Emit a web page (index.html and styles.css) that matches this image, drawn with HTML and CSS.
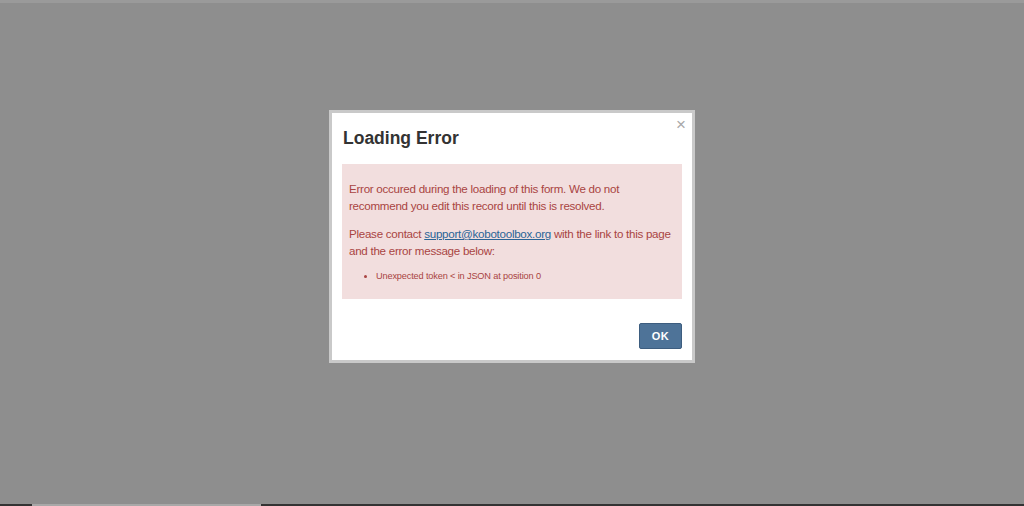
FILE: index.html
```html
<!DOCTYPE html>
<html>
<head>
<meta charset="utf-8">
<link rel="stylesheet" href="styles.css">
</head>
<body>
<div class="topline"></div>
<div class="overlay">
  <div class="modal">
    <span class="close">×</span>
    <h3 class="title">Loading Error</h3>
    <div class="alert">
      <p>Error occured during the loading of this form. We do not recommend you edit this record until this is resolved.</p>
      <p>Please contact <a href="#">support@kobotoolbox.org</a> with the link to this page and the error message below:</p>
      <ul>
        <li>Unexpected token &lt; in JSON at position 0</li>
      </ul>
    </div>
    <div class="footer">
      <button class="ok">OK</button>
    </div>
  </div>
</div>
<div class="bottombar"><span class="seg-a"></span><span class="seg-b"></span><span class="seg-c"></span></div>
</body>
</html>
```

FILE: styles.css
```css
html, body {
  margin: 0;
  padding: 0;
  height: 506px;
  overflow: hidden;
}
body {
  background: #8e8e8e;
  font-family: "Liberation Sans", Arial, sans-serif;
  display: flex;
  flex-direction: column;
}
.topline {
  height: 3px;
  background: #9a9a9a;
}
.overlay {
  flex: 1;
  display: flex;
  justify-content: center;
  align-items: flex-start;
  padding-top: 107px;
}
.modal {
  position: relative;
  background: #fff;
  border: 3px solid #c9c9c9;
  padding: 0 10px 11px 10px;
  box-sizing: content-box;
  width: 340px;
}
.close {
  position: absolute;
  right: 6px;
  top: 3px;
  font-size: 17px;
  color: #a8a8a8;
  line-height: 18px;
}
.title {
  margin: 0;
  padding: 15px 0 0 1px;
  font-size: 17.5px;
  font-weight: bold;
  color: #333;
  line-height: 20px;
  height: 36px;
}
.alert {
  background: #f2dede;
  color: #a94442;
  padding: 16px 7px 17px 7px;
  font-size: 11.6px;
  letter-spacing: -0.27px;
  line-height: 17px;
}
.alert p {
  margin: 0 0 11px 0;
}
.alert a {
  color: #2a6496;
  text-decoration: underline;
}
.alert ul {
  margin: 0;
  padding-left: 27px;
  font-size: 9.2px;
  letter-spacing: -0.15px;
  line-height: 12px;
}
.footer {
  display: flex;
  justify-content: flex-end;
  padding-top: 24px;
}
.ok {
  width: 43px;
  height: 26px;
  background: #4e7398;
  border: 1px solid #3d5d7f;
  border-radius: 2px;
  color: #fff;
  font-family: "Liberation Sans", Arial, sans-serif;
  font-size: 11px;
  font-weight: bold;
  letter-spacing: 0.5px;
  padding: 0;
}
.bottombar {
  height: 2px;
  display: flex;
}
.seg-a { width: 32px; background: #333; }
.seg-b { width: 229px; background: #a8a8a8; }
.seg-c { flex: 1; background: #333; }
```
